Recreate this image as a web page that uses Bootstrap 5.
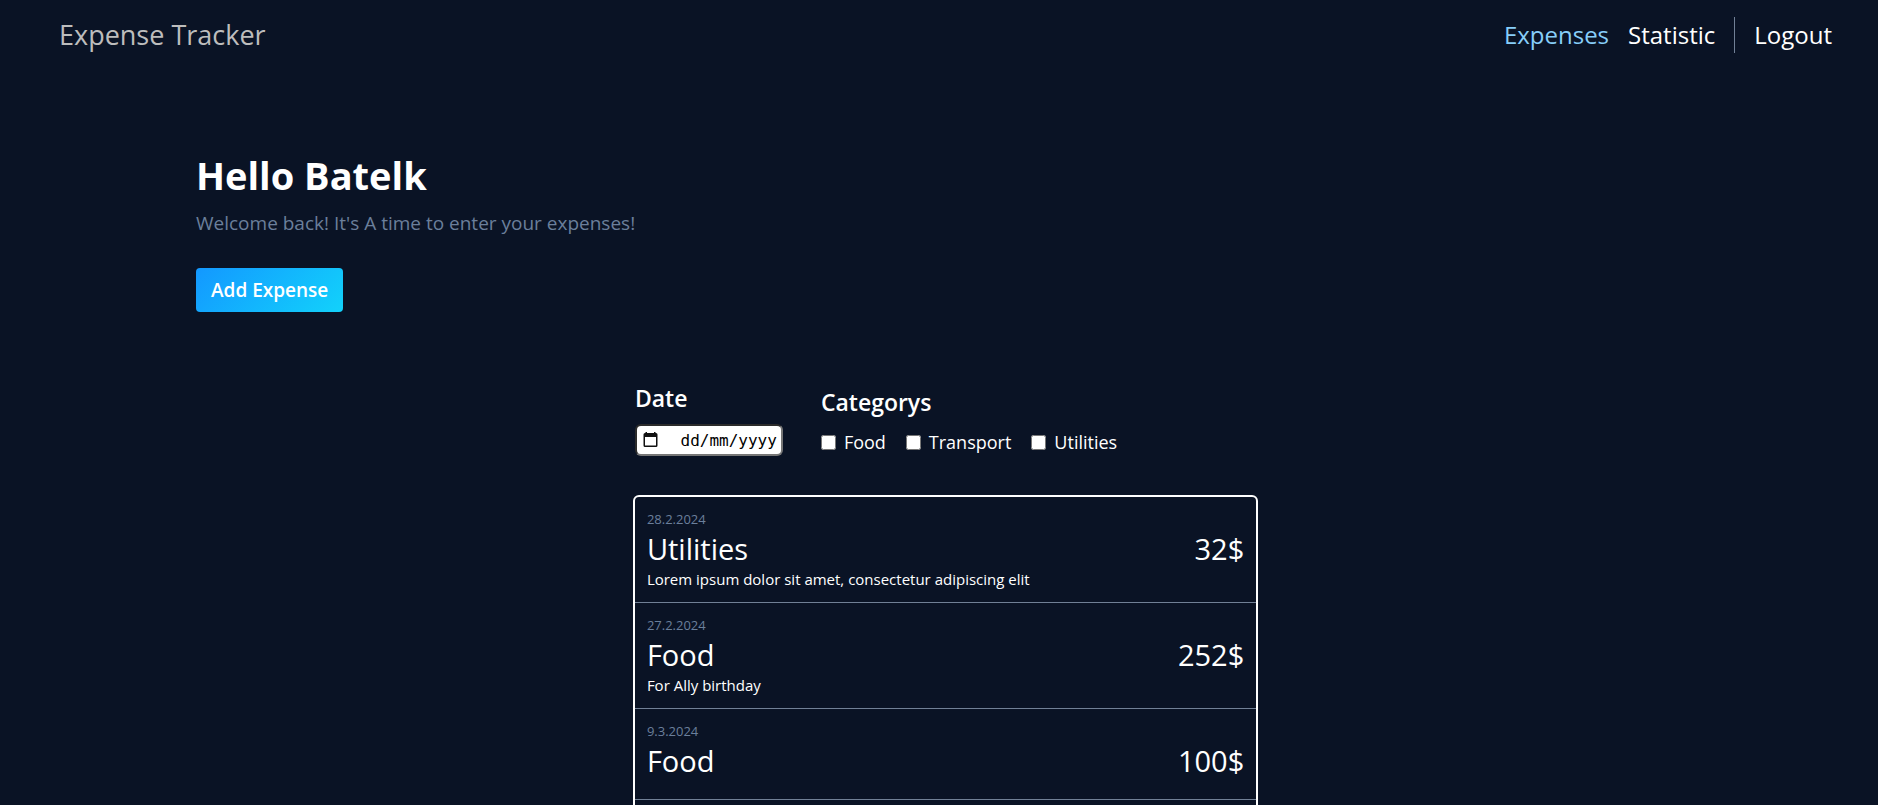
<!DOCTYPE html>
<html lang="en">
<head>
<meta charset="utf-8">
<meta name="viewport" content="width=device-width, initial-scale=1">
<title>Expense Tracker</title>
<link href="https://cdn.jsdelivr.net/npm/bootstrap@5.3.0/dist/css/bootstrap.min.css" rel="stylesheet">
<style>
  body { background: #0a1325; color: #fff; font-family: "Open Sans", "Noto Sans", sans-serif; }
  .topbar { padding: 17px 46px 17px 59px; }
  .brand-name { color: #bdbdbd; font-size: 27px; line-height: 36px; }
  .brand-name:hover { color: #fff; }
  .topnav { gap: 19px; font-size: 24px; line-height: 36px; }
  .topnav a { color: #fff; text-decoration: none; }
  .topnav a.active { color: #87cefa; }
  .topnav .split { border-left: 1px solid #718096; padding-left: 19px; }
  .hero { padding: 79px 196px 0; }
  .hero h1 { font-size: 38px; line-height: 52px; font-weight: 700; }
  .hero p { color: #6b7f9b; font-size: 19px; line-height: 28px; }
  .btn-add { color: #fff; border: 0; border-radius: 4px; background: linear-gradient(135deg, #1398ff, #12d2fb); font-size: 19px; font-weight: 600; line-height: 28px; padding: 8px 15px; margin-top: 31px; }
  .btn-add:hover { color: #fff; }
  .expenses { width: 33.3%; min-width: 520px; margin: 70px auto 0 33.7%; }
  .filters { gap: 38px; padding-left: 2px; }
  .filter-title { font-size: 23px; font-weight: 600; line-height: 32px; }
  .date-wrap { margin-top: 10px; }
  .date-box { width: 148px; height: 32px; border: 2px solid #767676; border-top-color: #2b2b2b; border-left-color: #2b2b2b; border-radius: 6px; background: #fff; color: #000; font: 16px/28px "DejaVu Sans Mono", monospace; text-align: right; padding: 0 4px; }
  .date-box::placeholder { color: #000; opacity: 1; }
  .cal { position: absolute; left: 8px; top: 8px; }
  .cat-title { margin-bottom: 10px; }
  .checks { gap: 20px; font-size: 18px; line-height: 28px; }
  .checks input { width: 15px; height: 15px; margin: 0; }
  .expense-list { border: 2px solid #fff; border-radius: 6px; margin-top: 39px; }
  .expense { padding: 12px; border-bottom: 1px solid #718096; }
  .expense:last-child { border-bottom: 0; }
  .when { color: #6b7f9b; font-size: 13px; line-height: 21px; }
  .what { font-size: 29px; line-height: 38px; }
  .note { font-size: 15px; line-height: 22px; min-height: 7px; }
</style>
</head>
<body>
<nav class="topbar d-flex justify-content-between align-items-center">
  <a class="brand-name text-decoration-none" href="#">Expense Tracker</a>
  <div class="topnav d-flex">
    <a class="active" href="#" aria-current="page">Expenses</a>
    <a href="#">Statistic</a>
    <a class="split" href="#">Logout</a>
  </div>
</nav>
<main>
  <header class="hero">
    <h1 class="mb-2">Hello Batelk</h1>
    <p class="mb-0">Welcome back! It's A time to enter your expenses!</p>
    <button type="button" class="btn btn-add">Add Expense</button>
  </header>
  <section class="expenses">
    <form class="filters d-flex">
      <div>
        <label class="filter-title d-block" for="date">Date</label>
        <div class="date-wrap position-relative">
          <input class="date-box d-block" id="date" type="text" placeholder="dd/mm/yyyy">
          <svg class="cal" width="15" height="16" viewBox="0 0 15 16" aria-hidden="true"><path fill="#111" fill-rule="evenodd" d="M2.500 0h1.500v1h7V0h1.500v1h.5q1.500 0 1.500 1.500v11q0 1.500-1.500 1.500h-11Q.5 15 .5 13.500v-11Q.5 1 2 1h.5zM2 5v8.500h11V5z"/></svg>
        </div>
      </div>
      <fieldset class="mt-1">
        <legend class="filter-title cat-title float-none">Categorys</legend>
        <div class="checks d-flex">
          <label class="d-flex align-items-center gap-2"><input type="checkbox">Food</label>
          <label class="d-flex align-items-center gap-2"><input type="checkbox">Transport</label>
          <label class="d-flex align-items-center gap-2"><input type="checkbox">Utilities</label>
        </div>
      </fieldset>
    </form>
    <ul class="expense-list list-unstyled mb-5">
      <li class="expense">
        <div class="when">28.2.2024</div>
        <div class="what d-flex justify-content-between"><span>Utilities</span><span>32$</span></div>
        <div class="note">Lorem ipsum dolor sit amet, consectetur adipiscing elit</div>
      </li>
      <li class="expense">
        <div class="when">27.2.2024</div>
        <div class="what d-flex justify-content-between"><span>Food</span><span>252$</span></div>
        <div class="note">For Ally birthday</div>
      </li>
      <li class="expense">
        <div class="when">9.3.2024</div>
        <div class="what d-flex justify-content-between"><span>Food</span><span>100$</span></div>
        <div class="note"></div>
      </li>
      <li class="expense"></li>
    </ul>
  </section>
</main>
<script src="https://cdn.jsdelivr.net/npm/bootstrap@5.3.0/dist/js/bootstrap.bundle.min.js"></script>
</body>
</html>
